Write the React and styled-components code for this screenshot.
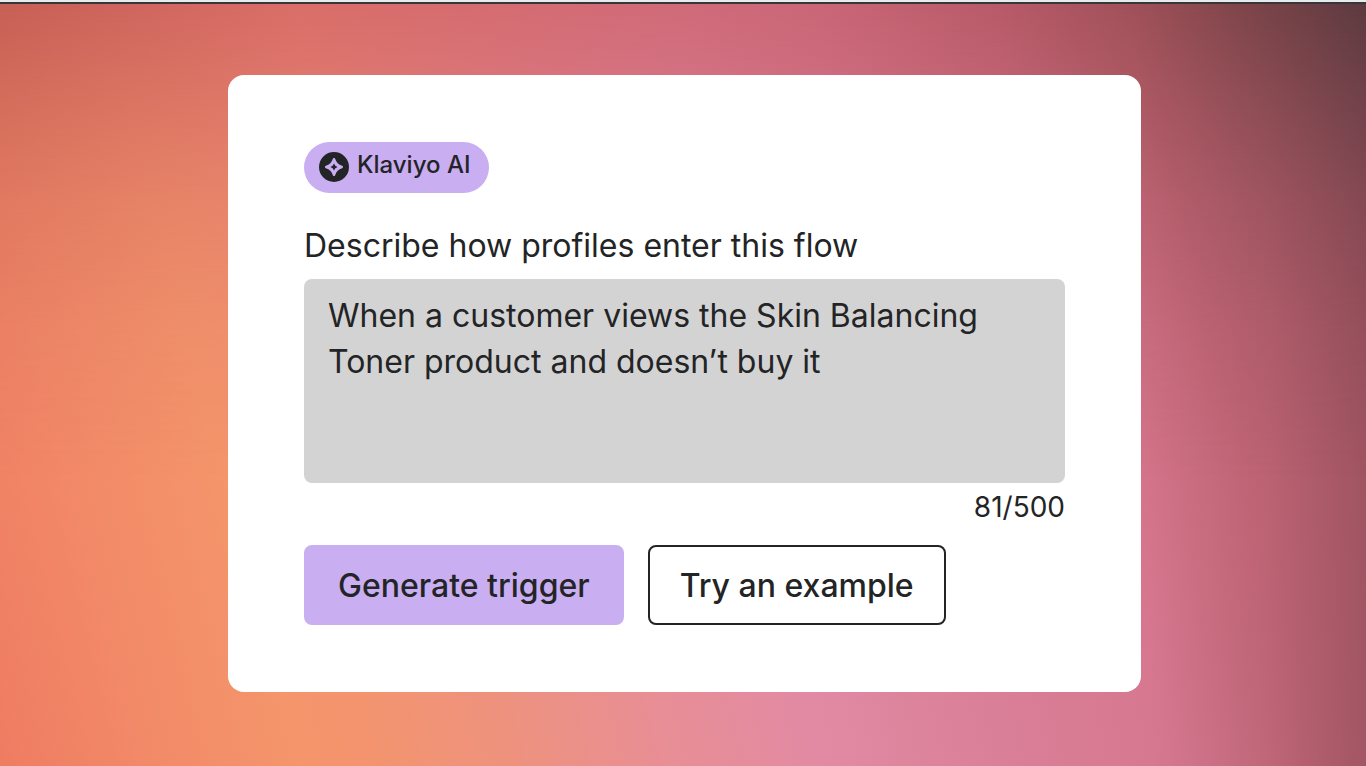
import { useState } from 'react'
import styled, { createGlobalStyle } from 'styled-components'

const EXAMPLE = 'When a customer views the Skin Balancing Toner product and doesn’t buy it'

const App = () => {
  const [prompt, setPrompt] = useState(EXAMPLE)

  return (
    <>
      <GlobalStyle />
      <Page>
        <Card>
          <Badge>
            <SparkIcon />
            Klaviyo AI
          </Badge>
          <Label htmlFor="prompt">Describe how profiles enter this flow</Label>
          <Prompt
            id="prompt"
            maxLength={500}
            spellCheck={false}
            value={prompt}
            onChange={(e) => setPrompt(e.target.value)}
          />
          <Count>81/500</Count>
          <Actions>
            <Button type="button" $primary>Generate trigger</Button>
            <Button type="button" onClick={() => setPrompt(EXAMPLE)}>Try an example</Button>
          </Actions>
        </Card>
      </Page>
    </>
  )
}

const SparkIcon = () => (
  <svg width="30" height="30" viewBox="0 0 30 30" aria-hidden="true">
    <circle cx="15" cy="15" r="15" fill="#232426" />
    <path
      d="M15 7.2C16.2 11.2 18.8 13.8 22.8 15C18.8 16.2 16.2 18.8 15 22.8C13.8 18.8 11.2 16.2 7.2 15C11.2 13.8 13.8 11.2 15 7.2Z"
      fill="#c9aef2"
      stroke="#c9aef2"
      strokeWidth="2.4"
      strokeLinejoin="round"
    />
    <path d="M15 11.4L16.3 13.7L18.6 15L16.3 16.3L15 18.6L13.7 16.3L11.4 15L13.7 13.7Z" fill="#232426" />
  </svg>
)

// =================================== styles
const GlobalStyle = createGlobalStyle`
  * {
    box-sizing: border-box;
  }
  body {
    margin: 0;
    color: #232426;
    font-family: Inter, "Liberation Sans", sans-serif;
  }
`
const Page = styled.main`
  position: relative;
  isolation: isolate;
  min-height: 100vh;
  padding: 73px 225px 72px 228px;
  border-top: 2px solid #e6ecee;
  background:
    linear-gradient(to left, rgba(116, 64, 76, 0.45) 0%, rgba(116, 64, 76, 0.18) 7%, rgba(116, 64, 76, 0) 16%),
    linear-gradient(
      76deg,
      #ef7c62 0%,
      #f28a68 10%,
      #f4956b 19%,
      #f39470 25%,
      #ee927e 33%,
      #e88e95 43%,
      #e28aa4 53%,
      #d97f97 65%,
      #d6778f 76%,
      #cb6a7c 85%,
      #bc5f6c 100%
    );

  /* darker band that fades out down the page */
  &::before {
    content: '';
    position: absolute;
    inset: 0;
    z-index: -1;
    border-top: 2px solid #3a3638;
    background: linear-gradient(
      to right,
      #c65f55 0%,
      #d96d68 22%,
      #cf6a78 50%,
      #c96676 60%,
      #b85a68 73%,
      #9f5058 83%,
      #7d4549 91%,
      #5c3a40 100%
    );
    mask-image: linear-gradient(
      to bottom,
      #000 0%,
      rgba(0, 0, 0, 0.68) 13%,
      rgba(0, 0, 0, 0.38) 26%,
      rgba(0, 0, 0, 0.14) 43%,
      rgba(0, 0, 0, 0) 62%
    );
  }
`
const Card = styled.section`
  display: flex;
  flex-direction: column;
  align-items: flex-start;
  padding: 67px 76px;
  border-radius: 16px;
  background: #fff;
`
const Badge = styled.div`
  display: flex;
  align-items: flex-start;
  gap: 8px;
  height: 51px;
  padding: 10px 19px 0 15px;
  border-radius: 26px;
  background: #c9aef2;
  font-size: 24px;
  font-weight: 500;
  line-height: 26px;
`
const Label = styled.label`
  margin: 33px 0 13px;
  font-size: 32px;
  line-height: 40px;
`
const Prompt = styled.textarea`
  display: block;
  width: 100%;
  height: 204px;
  padding: 14px 24px;
  border: 0;
  border-radius: 8px;
  outline: 0;
  resize: none;
  background: #d3d3d3;
  color: inherit;
  font: inherit;
  font-size: 32px;
  line-height: 46px;
`
const Count = styled.p`
  align-self: flex-end;
  margin: 8px 0 22px;
  font-size: 28px;
  line-height: 32px;
`
const Actions = styled.div`
  display: flex;
  gap: 24px;
`
const Button = styled.button`
  height: 80px;
  padding: 0 ${(props) => (props.$primary ? '32px' : '30px')};
  border: 2px solid ${(props) => (props.$primary ? '#c9aef2' : '#232426')};
  border-radius: 8px;
  background: ${(props) => (props.$primary ? '#c9aef2' : '#fff')};
  color: inherit;
  font: inherit;
  font-size: 32px;
  font-weight: 500;
  cursor: pointer;
`

export default App
